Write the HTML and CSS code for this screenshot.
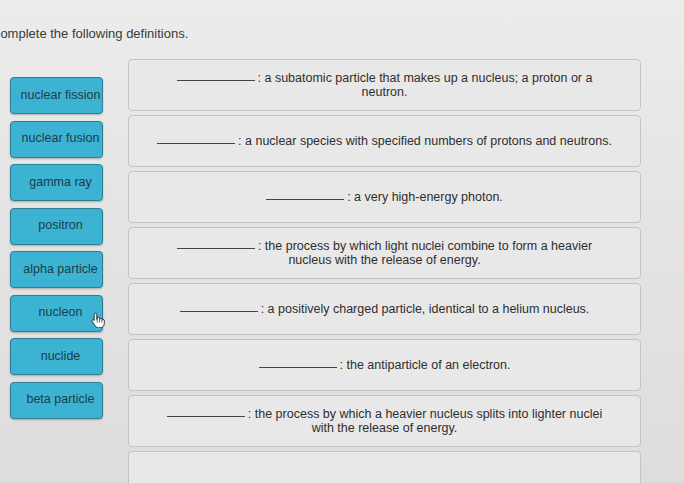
FILE: index.html
```html
<!DOCTYPE html>
<html lang="en">
<head>
<meta charset="utf-8">
<title>Complete the following definitions</title>
<link rel="stylesheet" href="styles.css">
</head>
<body>
<div class="page">
  <h1 class="title">Complete the following definitions.</h1>
  <div class="exercise">
    <div class="bank">
      <div class="tile">nuclear fission</div>
      <div class="tile">nuclear fusion</div>
      <div class="tile">gamma ray</div>
      <div class="tile">positron</div>
      <div class="tile">alpha particle</div>
      <div class="tile tile-hover">nucleon
        <svg class="cursor" width="14" height="16" viewBox="0 0 14 16" aria-hidden="true">
          <path d="M4.5 1.2c.8 0 1.3.6 1.3 1.3v5l.4-.1V6.2c0-.7.5-1.2 1.2-1.2s1.2.5 1.2 1.2v1.3l.3-.1c0-.7.5-1.1 1.1-1.1s1.1.5 1.1 1.2v.7c.1-.5.6-.9 1.1-.9.6 0 1.1.5 1.1 1.2v2.9c0 2.4-1.7 4.4-4.3 4.4H7.6c-1.3 0-2.4-.6-3.2-1.7L1.1 9.5c-.4-.6-.2-1.3.4-1.6.5-.3 1.1-.2 1.5.3l.2.3V2.5c0-.7.6-1.3 1.300-1.3z" fill="#fff" stroke="#222" stroke-width=".9" stroke-linejoin="round"/>
          <path d="M6.2 7.6v3M8.6 7.6v3M10.8 8v2.6" stroke="#222" stroke-width=".7" fill="none"/>
        </svg>
      </div>
      <div class="tile">nuclide</div>
      <div class="tile">beta particle</div>
    </div>
    <div class="targets">
      <div class="target"><p class="def"><span class="blank"></span>: a subatomic particle that makes up a nucleus; a proton or a neutron.</p></div>
      <div class="target"><p class="def"><span class="blank"></span>: a nuclear species with specified numbers of protons and neutrons.</p></div>
      <div class="target"><p class="def"><span class="blank"></span>: a very high-energy photon.</p></div>
      <div class="target"><p class="def"><span class="blank"></span>: the process by which light nuclei combine to form a heavier nucleus with the release of energy.</p></div>
      <div class="target"><p class="def"><span class="blank"></span>: a positively charged particle, identical to a helium nucleus.</p></div>
      <div class="target"><p class="def"><span class="blank"></span>: the antiparticle of an electron.</p></div>
      <div class="target"><p class="def"><span class="blank"></span>: the process by which a heavier nucleus splits into lighter nuclei with the release of energy.</p></div>
      <div class="target target-cut"></div>
    </div>
  </div>
</div>
</body>
</html>
```
FILE: styles.css
```css
html, body {
  margin: 0;
  padding: 0;
  height: 100%;
  overflow: hidden;
}
body {
  background: linear-gradient(180deg, #ececec 0%, #e6e5e6 40%, #dedcdd 100%);
  font-family: "Liberation Sans", Arial, sans-serif;
  color: #333;
}
.page {
  padding-top: 26px;
}
.title {
  margin: 0 0 0 -9px;
  font-size: 13px;
  font-weight: normal;
  color: #3a3a3a;
  line-height: 16px;
}
.exercise {
  display: flex;
  align-items: flex-start;
  margin-top: 17px;
}
.bank {
  display: flex;
  flex-direction: column;
  gap: 6.5px;
  width: 93px;
  margin-left: 10px;
  margin-top: 18px;
}
.tile {
  position: relative;
  height: 37px;
  box-sizing: border-box;
  display: flex;
  align-items: center;
  justify-content: center;
  padding-left: 8px;
  padding-bottom: 2px;
  background: #3db3d3;
  border: 1px solid #2f7e94;
  border-radius: 4px;
  box-shadow: 0 1px 2px rgba(0,0,0,0.25);
  font-size: 12.5px;
  color: #1d3c47;
  white-space: nowrap;
}
.cursor {
  position: absolute;
  left: 80px;
  top: 16px;
}
.targets {
  display: flex;
  flex-direction: column;
  gap: 4px;
  width: 513px;
  margin-left: 25px;
}
.target {
  height: 52px;
  box-sizing: border-box;
  border: 1px solid #c4c3c4;
  border-radius: 4px;
  background: #e9e8e9;
  display: flex;
  align-items: center;
  justify-content: center;
}
.target-cut {
  height: 40px;
  border-bottom: none;
  border-radius: 4px 4px 0 0;
}
.def {
  margin: 0;
  max-width: 460px;
  text-align: center;
  font-size: 12.5px;
  line-height: 14px;
  color: #2e2e2e;
}
.blank {
  display: inline-block;
  width: 78px;
  border-bottom: 1px solid #444;
  vertical-align: 1px;
  margin-right: 3px;
}
```
